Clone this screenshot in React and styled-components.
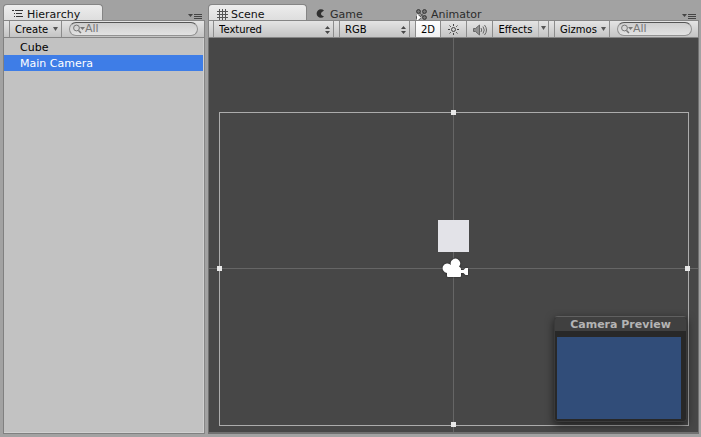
import React from "react";
import styled, { createGlobalStyle } from "styled-components";

const GlobalStyle = createGlobalStyle`
  * { box-sizing: border-box; }
  body {
    margin: 0;
    background: #a2a2a2;
    color: #111;
    font-family: "DejaVu Sans", Verdana, sans-serif;
    font-size: 11px;
  }
  button, input, select { font: inherit; color: inherit; margin: 0; }
`;

const Editor = styled.div`
  display: grid;
  grid-template-columns: 202px minmax(0, 1fr);
  column-gap: 3px;
  height: 100vh;
  padding: 4px 2px 3px 3px;
`;

const Panel = styled.section`
  display: flex;
  flex-direction: column;
  min-width: 0;
`;

const TabBar = styled.div`
  display: flex;
  height: 16px;
  padding-right: 3px;
`;

const Tab = styled.button`
  display: flex;
  align-items: center;
  gap: ${(p) => p.$gap || 4}px;
  width: ${(p) => p.$width}px;
  height: 16px;
  padding: 4px 0 0 8px;
  border: 1px solid ${(p) => (p.$active ? "#858585" : "transparent")};
  border-bottom: 0;
  border-radius: 4px 4px 0 0;
  background: ${(p) => (p.$active ? "linear-gradient(#ededed, #dedede)" : "none")};
  color: ${(p) => (p.$active ? "#111" : "#2c2c2c")};
  line-height: 12px;
  white-space: nowrap;
`;

const MenuButton = styled.button`
  display: flex;
  align-items: flex-end;
  margin-left: auto;
  padding: 0;
  border: 0;
  background: none;
`;

const Toolbar = styled.div`
  display: flex;
  align-items: stretch;
  height: 18px;
  padding-left: ${(p) => p.$inset}px;
  border: 1px solid #858585;
  background: linear-gradient(#e4e4e4, #c4c4c4);
  font-size: 10px;
  color: #000;
`;

const ToolButton = styled.button`
  display: flex;
  align-items: center;
  justify-content: ${(p) => (p.$spread ? "space-between" : "center")};
  flex: none;
  width: ${(p) => p.$width}px;
  padding: ${(p) => (p.$spread ? "1px 3px 0 5px" : "1px 0 0")};
  border: 0;
  border-right: 1px solid #8c8c8c;
  border-left: ${(p) => (p.$first ? "1px solid #8c8c8c" : "0")};
  background: ${(p) => (p.$active ? "linear-gradient(#ffffff, #f0f0f0)" : "none")};
`;

const EffectsGroup = styled.div`
  display: flex;
  border-right: 1px solid #8c8c8c;
`;

const EffectsButton = styled.button`
  width: 45px;
  padding: 1px 0 0;
  border: 0;
  background: none;
`;

const EffectsArrow = styled.button`
  display: flex;
  align-items: center;
  justify-content: center;
  width: 10px;
  padding: 0;
  border: 0;
  border-left: 1px solid #b0b0b0;
  background: none;
`;

const SelectBox = styled.label`
  position: relative;
  display: flex;
  flex: none;
  width: ${(p) => p.$width}px;
  margin-right: 5px;
  border: solid #8c8c8c;
  border-width: 0 1px;

  select {
    flex: 1;
    min-width: 0;
    padding: 1px 12px 0 5px;
    border: 0;
    appearance: none;
    background: none;
  }
  svg {
    position: absolute;
    right: 3px;
    top: 5px;
    pointer-events: none;
  }
`;

const Spacer = styled.div`
  flex: 1;
`;

const SearchField = styled.label`
  display: flex;
  align-items: center;
  flex: ${(p) => (p.$width ? `0 0 ${p.$width}px` : 1)};
  min-width: 0;
  height: 14px;
  margin: 1px 6px 0 7px;
  padding-left: 3px;
  border: 1px solid #929292;
  border-top-color: #555;
  border-radius: 7px;
  background: linear-gradient(#cecece, #e2e2e2);
  font-size: 11px;

  input {
    flex: 1;
    min-width: 0;
    width: 100%;
    height: 12px;
    padding: 0 0 1px;
    border: 0;
    outline: 0;
    background: none;
  }
  input::placeholder { color: #777; opacity: 1; }
`;

const Tree = styled.ul`
  flex: 1;
  margin: 0;
  padding: 1px 0 0;
  list-style: none;
  border: 1px solid #808080;
  border-top: 0;
  border-right-color: #858585;
  background: #c2c2c2;
  box-shadow: inset -1px -1px #d0d0d0;
`;

const TreeItem = styled.li`
  height: 16px;
  padding-left: 16px;
  margin-right: 1px;
  line-height: 17px;
  background: ${(p) => (p.$selected ? "#3e7de7" : "transparent")};
  color: ${(p) => (p.$selected ? "#fff" : "#000")};
`;

const Viewport = styled.div`
  position: relative;
  flex: 1;
  overflow: hidden;
  border: 1px solid #707070;
  border-top: 0;
  border-bottom-width: 2px;
  background: #474747;
`;

const CameraFrame = styled.div`
  position: absolute;
  inset: 74px 9px 6px 10px;
  border: 1px solid #acacac;
`;

const Axis = styled.div`
  position: absolute;
  background: #666;
  ${(p) =>
    p.$vertical
      ? "left: calc(50% - 1px); top: -100vh; bottom: -100vh; width: 1px;"
      : "top: calc(50% - 1px); left: -100vw; right: -100vw; height: 1px;"}
`;

const Handle = styled.div`
  position: absolute;
  left: ${(p) => p.$x};
  top: ${(p) => p.$y};
  width: 5px;
  height: 5px;
  margin: -3px;
  background: #e8e8e8;
`;

const Cube = styled.div`
  position: absolute;
  left: calc(50% - 16px);
  top: calc(50% - 49px);
  width: 31px;
  height: 32px;
  background: #e3e3e8;
`;

const CameraGizmo = styled.svg`
  position: absolute;
  left: calc(50% - 13px);
  top: calc(50% - 11px);
  filter: drop-shadow(0 0 1px #222);
`;

const Preview = styled.figure`
  position: absolute;
  right: 11px;
  bottom: 10px;
  width: 133px;
  margin: 0;
  border: 1px solid #3a3a3a;
  border-top-color: #606060;
  border-radius: 4px;
  background: #282828;
  box-shadow: 0 3px 8px rgba(0, 0, 0, 0.6);
`;

const PreviewTitle = styled.figcaption`
  height: 14px;
  border-radius: 3px 3px 0 0;
  background: #404040;
  color: #b4b4b4;
  font-weight: bold;
  line-height: 16px;
  text-align: center;
`;

const PreviewImage = styled.div`
  height: 82px;
  margin: 6px 5px 2px 2px;
  background: #314d79;
`;

const DownArrow = () => (
  <svg width="5" height="6" aria-hidden="true">
    <path d="M0 0h5L2.500 4z" fill="#555" />
  </svg>
);

const UpDown = () => (
  <svg width="5" height="8" aria-hidden="true">
    <path d="M0 3h5L2.500 0zM0 5h5L2.500 8z" fill="#484848" />
  </svg>
);

const PaneMenu = () => (
  <MenuButton aria-label="Panel options">
    <svg width="14" height="7" aria-hidden="true">
      <path d="M0 1h5L2.500 4z" fill="#444" />
      <path d="M6 1.500h8M6 3.500h8M6 5.500h8" stroke="#444" />
    </svg>
  </MenuButton>
);

const Search = ({ label, width }) => (
  <SearchField $width={width}>
    <svg width="12" height="10" aria-hidden="true">
      <circle cx="3.500" cy="4" r="2.900" fill="none" stroke="#777" />
      <path d="M5.500 6.500L8 9" stroke="#777" strokeWidth="1.500" />
      <path d="M7 3h5L9.500 6z" fill="#777" />
    </svg>
    <input type="text" aria-label={label} placeholder="All" />
  </SearchField>
);

const HierarchyIcon = () => (
  <svg width="11" height="10" aria-hidden="true">
    <path d="M0 .5h2M3 .5h8M2 3.500h1M4 3.500h6M2 6.500h1M4 6.500h7" stroke="#333" />
  </svg>
);

const GridIcon = () => (
  <svg width="11" height="12" aria-hidden="true">
    <path d="M2.500 0v11M5.500 0v11M8.500 0v11M0 2.500h11M0 5.500h11M0 8.500h11" stroke="#555" />
  </svg>
);

const GameIcon = () => (
  <svg width="9" height="11" aria-hidden="true">
    <path d="M8 1.500A4.300 4.300 0 1 0 8 7.500L6 6.500Q4 4.500 6 3z" fill="#303030" />
  </svg>
);

const AnimatorIcon = () => (
  <svg width="11" height="12" aria-hidden="true">
    <path d="M3 3L8.500 9M8.500 3L3 9" stroke="#555" />
    <g fill="#777" stroke="#333">
      <circle cx="2.500" cy="2.500" r="1.900" />
      <circle cx="8.500" cy="2.500" r="1.900" />
      <circle cx="8.500" cy="8.500" r="1.900" />
      <circle cx="2.500" cy="8.500" r="1.900" />
    </g>
    <path d="M1 5l4 3.500L1 12z" fill="#fff" />
  </svg>
);

const SunIcon = () => (
  <svg width="11" height="11" aria-hidden="true" fill="none" stroke="#444">
    <circle cx="5.500" cy="5.500" r="2" />
    <path d="M5.500 0v2M5.500 9v2M0 5.500h2M9 5.500h2M1.500 1.500l1.300 1.300M8.200 8.200l1.300 1.300M9.500 1.500L8.200 2.800M2.800 8.200L1.500 9.500" />
  </svg>
);

const SpeakerIcon = () => (
  <svg width="14" height="12" aria-hidden="true" fill="none" stroke="#666">
    <path d="M.5 4.500h2L6.500 1v10L2.500 7.500h-2z" fill="#909090" />
    <path d="M8 4q1.500 2 0 4M10 2.500q2.500 3.500 0 7M11.500 1q4 5 0 10" />
  </svg>
);

export default function App() {
  return (
    <>
      <GlobalStyle />
      <Editor>
        <Panel>
          <TabBar>
            <Tab $active $width={100}>
              <HierarchyIcon />
              Hierarchy
            </Tab>
            <PaneMenu />
          </TabBar>
          <Toolbar $inset={5}>
            <ToolButton $first $spread $width={53}>
              Create
              <DownArrow />
            </ToolButton>
            <Search label="Search hierarchy" />
          </Toolbar>
          <Tree>
            <TreeItem>Cube</TreeItem>
            <TreeItem $selected>Main Camera</TreeItem>
          </Tree>
        </Panel>

        <Panel>
          <TabBar>
            <Tab $active $width={99} $gap={3}>
              <GridIcon />
              Scene
            </Tab>
            <Tab $width={100} $gap={5}>
              <GameIcon />
              Game
            </Tab>
            <Tab $width={86}>
              <AnimatorIcon />
              Animator
            </Tab>
            <PaneMenu />
          </TabBar>
          <Toolbar $inset={4}>
            <SelectBox $width={121}>
              <select aria-label="Draw mode">
                <option>Textured</option>
              </select>
              <UpDown />
            </SelectBox>
            <SelectBox $width={71}>
              <select aria-label="Render mode">
                <option>RGB</option>
              </select>
              <UpDown />
            </SelectBox>
            <ToolButton $first $active $width={26}>2D</ToolButton>
            <ToolButton $width={26} aria-label="Scene lighting">
              <SunIcon />
            </ToolButton>
            <ToolButton $width={26} aria-label="Scene audio">
              <SpeakerIcon />
            </ToolButton>
            <EffectsGroup>
              <EffectsButton>Effects</EffectsButton>
              <EffectsArrow aria-label="Effects options">
                <DownArrow />
              </EffectsArrow>
            </EffectsGroup>
            <Spacer />
            <ToolButton $first $spread $width={56}>
              Gizmos
              <DownArrow />
            </ToolButton>
            <Search label="Search scene" width={75} />
          </Toolbar>
          <Viewport>
            <CameraFrame>
              <Axis $vertical />
              <Axis />
              <Handle $x="50%" $y="0" />
              <Handle $x="50%" $y="100%" />
              <Handle $x="0" $y="50%" />
              <Handle $x="100%" $y="50%" />
              <Cube />
              <CameraGizmo width="27" height="20" aria-label="Main Camera">
                <path
                  fill="#fff"
                  d="M10 7A4.700 4.700 0 1 1 18 8.500Q19 9 20 10.500V12h2.500l2-2H27v7h-2.500l-2-2H20v3q0 1-1 1H7q-1 0-1-1v-3A4.800 4.800 0 1 1 10 7z"
                />
              </CameraGizmo>
            </CameraFrame>
            <Preview>
              <PreviewTitle>Camera Preview</PreviewTitle>
              <PreviewImage />
            </Preview>
          </Viewport>
        </Panel>
      </Editor>
    </>
  );
}
